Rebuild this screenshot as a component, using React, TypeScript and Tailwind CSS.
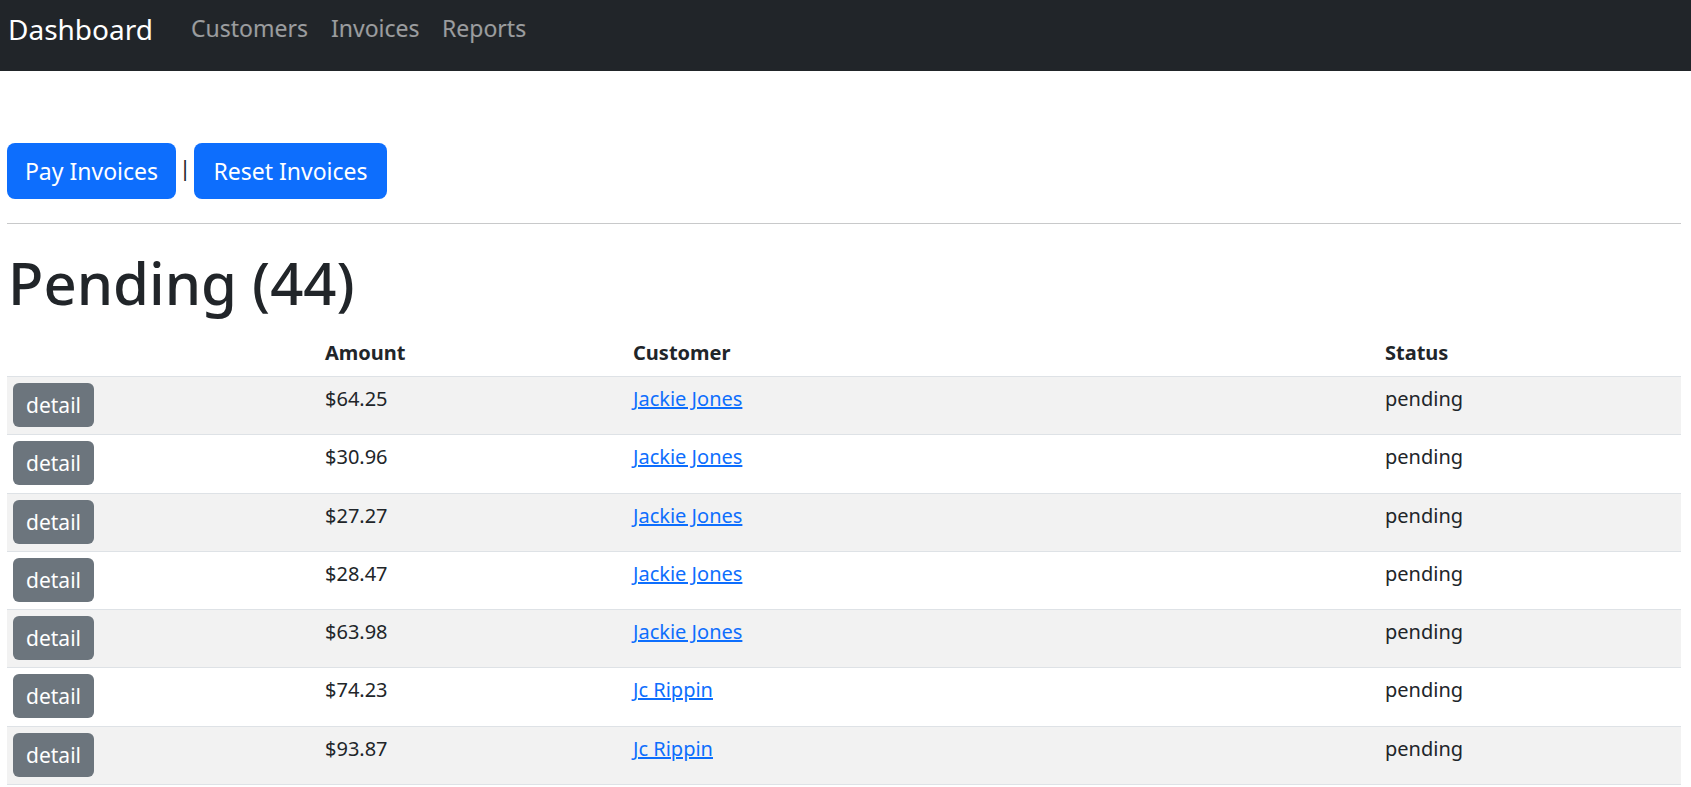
import React from 'react';

type Invoice = { id: number; amount: string; customer: string; status: string };

const invoices: Invoice[] = [
  { id: 1, amount: '$64.25', customer: 'Jackie Jones', status: 'pending' },
  { id: 2, amount: '$30.96', customer: 'Jackie Jones', status: 'pending' },
  { id: 3, amount: '$27.27', customer: 'Jackie Jones', status: 'pending' },
  { id: 4, amount: '$28.47', customer: 'Jackie Jones', status: 'pending' },
  { id: 5, amount: '$63.98', customer: 'Jackie Jones', status: 'pending' },
  { id: 6, amount: '$74.23', customer: 'Jc Rippin', status: 'pending' },
  { id: 7, amount: '$93.87', customer: 'Jc Rippin', status: 'pending' },
];

const cols = 'grid grid-cols-[312px_308px_752px_1fr]';

export default function App(): React.ReactElement {
  return (
    <div className="min-h-screen bg-white font-['Noto_Sans',sans-serif] text-[#212529]">
      <nav className="flex h-[71px] items-start bg-[#212529] pt-[8px] pl-[8px]">
        <a href="#" className="mt-[1px] w-[183px] text-[28px] leading-[40px] text-white">
          Dashboard
        </a>
        <a href="#" className="w-[140px] text-[23px] leading-[40px] text-white/55">
          Customers
        </a>
        <a href="#" className="w-[111px] text-[23px] leading-[40px] text-white/55">
          Invoices
        </a>
        <a href="#" className="text-[23px] leading-[40px] text-white/55">
          Reports
        </a>
      </nav>

      <main className="pr-[10px] pl-[7px]">
        <div className="mt-[72px] flex items-start">
          <button
            type="button"
            className="flex h-[56px] w-[169px] items-center justify-center rounded-[8px] bg-[#0d6efd] text-[23px] leading-[34px] text-white"
          >
            Pay Invoices
          </button>
          <span className="h-[56px] w-[18px] text-center text-[22px] leading-[48px]">|</span>
          <button
            type="button"
            className="flex h-[56px] w-[193px] items-center justify-center rounded-[8px] bg-[#0d6efd] text-[23px] leading-[34px] text-white"
          >
            Reset Invoices
          </button>
        </div>

        <hr className="mt-[24px] h-px border-0 bg-[#c8c9ca]" />

        <h1 className="mt-[24px] ml-[1px] h-[70px] text-[58px] leading-[70px] font-medium">
          Pending (44)
        </h1>

        <div className="mt-[14px] text-[20px] leading-[30px]">
          <div className={`${cols} border-b border-[#dee2e6] pt-[6px] pb-[8px] font-bold`}>
            <div className="px-[6px]" />
            <div className="px-[6px]">Amount</div>
            <div className="px-[6px]">Customer</div>
            <div className="px-[6px]">Status</div>
          </div>
          {invoices.map((inv, i) => (
            <div
              key={inv.id}
              className={`${cols} h-[58.3px] border-b border-[#dee2e6] ${i % 2 === 0 ? 'bg-[#f2f2f2]' : 'bg-white'}`}
            >
              <div className="px-[6px] pt-[6px]">
                <button
                  type="button"
                  className="flex h-[44px] w-[81px] items-center justify-center rounded-[6px] bg-[#6c757d] text-[21px] text-white"
                >
                  detail
                </button>
              </div>
              <div className="px-[6px] pt-[7px]">{inv.amount}</div>
              <div className="px-[6px] pt-[7px]">
                <a href="#" className="text-[#0d6efd] underline">
                  {inv.customer}
                </a>
              </div>
              <div className="px-[6px] pt-[7px]">{inv.status}</div>
            </div>
          ))}
        </div>
      </main>
    </div>
  );
}
